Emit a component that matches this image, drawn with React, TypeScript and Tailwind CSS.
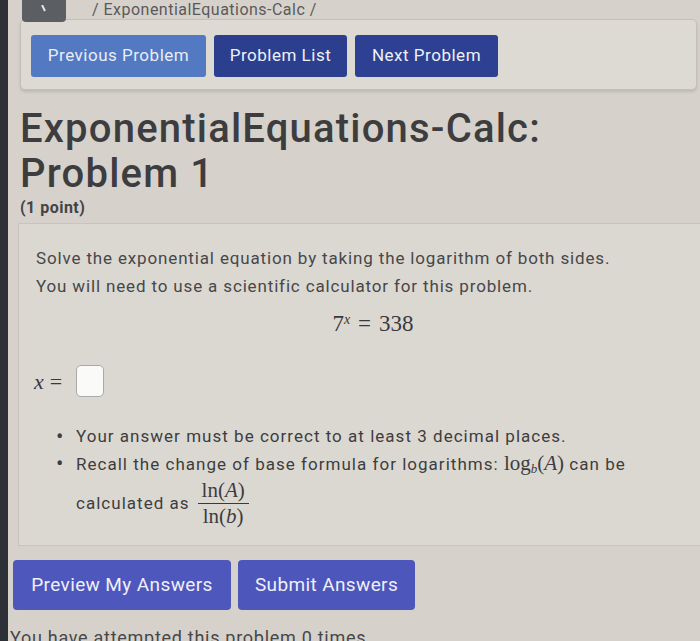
import React from "react";

const sans = { fontFamily: 'Roboto, "Liberation Sans", Arial, sans-serif' };
const serif = { fontFamily: '"Liberation Serif", "Times New Roman", serif' };

export default function App() {
  return (
    <div className="w-[700px] h-[641px] overflow-hidden flex bg-[#d6d2cb]" style={sans}>
      <div className="w-[8px] shrink-0 bg-[#2e3037]" />
      <div className="flex-1 flex flex-col relative">
        {/* top breadcrumb row */}
        <div className="h-[20px] flex items-start">
          <div className="absolute left-[14px] top-0 w-[44px] h-[22px] bg-[#5b5e63] rounded-b-[4px] flex items-center justify-center z-10">
            <svg width="10" height="12" viewBox="0 0 10 12"><path d="M3 0 L6 6" stroke="#e5e5e5" strokeWidth="2" fill="none" /></svg>
          </div>
          <div className="ml-[84px] mt-[1px] text-[16px] leading-[18px] text-[#5a5a5c] tracking-[0.03em]">
            / ExponentialEquations-Calc /
          </div>
        </div>
        {/* nav box */}
        <div className="ml-[12px] mr-[3px] rounded-[5px] border border-[#c4c0b9] bg-[#dddad4] shadow-[0_2px_3px_rgba(0,0,0,0.12)] pt-[15px] pb-[12px] pl-[10px] flex gap-[8px] items-center">
          <button className="h-[42px] w-[175px] rounded-[3px] bg-[#5279c1] text-[#e9edf6] text-[17px] tracking-[0.03em]">
            Previous Problem
          </button>
          <button className="h-[42px] w-[133px] rounded-[3px] bg-[#2c3f8f] text-[#eef0f7] text-[17px] tracking-[0.03em]">
            Problem List
          </button>
          <button className="h-[42px] w-[143px] rounded-[3px] bg-[#2d4091] text-[#eef0f7] text-[17px] tracking-[0.03em]">
            Next Problem
          </button>
        </div>
        {/* title */}
        <div className="ml-[12px] mt-[16px] text-[40px] leading-[45px] font-medium text-[#3d3d40] tracking-[0.03em]">
          <div>ExponentialEquations-Calc:</div>
          <div>Problem 1</div>
        </div>
        <div className="ml-[12px] text-[16px] leading-[24px] font-bold text-[#444447] tracking-[0.03em]">(1 point)</div>
        {/* problem box */}
        <div className="ml-[10px] mt-[3px] h-[323px] border-t border-l border-b border-[#c9c5be] bg-[#dbd8d2] pl-[17px] pt-[20px] text-[#474749] shrink-0">
          <div className="text-[17px] leading-[28px] tracking-[0.05em]">
            Solve the exponential equation by taking the logarithm of both sides.
          </div>
          <div className="text-[17px] leading-[28px] tracking-[0.05em]">
            You will need to use a scientific calculator for this problem.
          </div>
          <div className="mt-[10px] h-[28px] flex items-center justify-center pl-[10px] text-[23px] text-[#3a3a3c]" style={serif}>
            <span>
              7<sup className="text-[14px] italic">x</sup>
              <span className="mx-[8px]">=</span>338
            </span>
          </div>
          <div className="mt-[27px] h-[32px] flex items-center text-[22px] text-[#3a3a3c]" style={serif}>
            <span className="italic ml-[-2px]">x</span>
            <span className="ml-[6px]">=</span>
            <div className="ml-[14px] w-[28px] h-[32px] rounded-[5px] border border-[#a9a9a9] bg-[#fafaf8]" />
          </div>
          <ul className="mt-[26px] ml-[20px] text-[17px] leading-[27px] text-[#3d3d40] tracking-[0.06em]">
            <li className="flex items-center">
              <span className="w-[20px] shrink-0 text-[22px] leading-[27px]">•</span>
              <span>Your answer must be correct to at least 3 decimal places.</span>
            </li>
            <li className="flex items-start">
              <span className="w-[20px] shrink-0 text-[22px] leading-[27px]">•</span>
              <div>
                <div>
                  Recall the change of base formula for logarithms:{" "}
                  <span className="text-[21px] tracking-normal" style={serif}>
                    log<sub className="text-[13px] italic">b</sub>(<span className="italic">A</span>)
                  </span>{" "}
                  can be
                </div>
                <div className="flex items-center">
                  <span>calculated as</span>
                  <span className="ml-[8px] inline-flex flex-col items-center text-[21px] leading-[25px] tracking-normal" style={serif}>
                    <span className="px-[4px]">ln(<span className="italic">A</span>)</span>
                    <span className="w-full h-[1px] bg-[#3a3a3c]" />
                    <span className="px-[4px]">ln(<span className="italic">b</span>)</span>
                  </span>
                </div>
              </div>
            </li>
          </ul>
        </div>
        {/* submit buttons */}
        <div className="mt-[14px] ml-[5px] flex gap-[7px] items-center">
          <button className="h-[50px] w-[218px] rounded-[4px] bg-[#4e57bc] text-[#eef0f8] text-[19px] tracking-[0.02em]">
            Preview My Answers
          </button>
          <button className="h-[50px] w-[177px] rounded-[4px] bg-[#4d56bb] text-[#eef0f8] text-[19px] tracking-[0.02em]">
            Submit Answers
          </button>
        </div>
        <div className="mt-[16px] ml-[2px] text-[18px] leading-[24px] text-[#47474a] tracking-[0.04em]">
          You have attempted this problem 0 times.
        </div>
      </div>
    </div>
  );
}
